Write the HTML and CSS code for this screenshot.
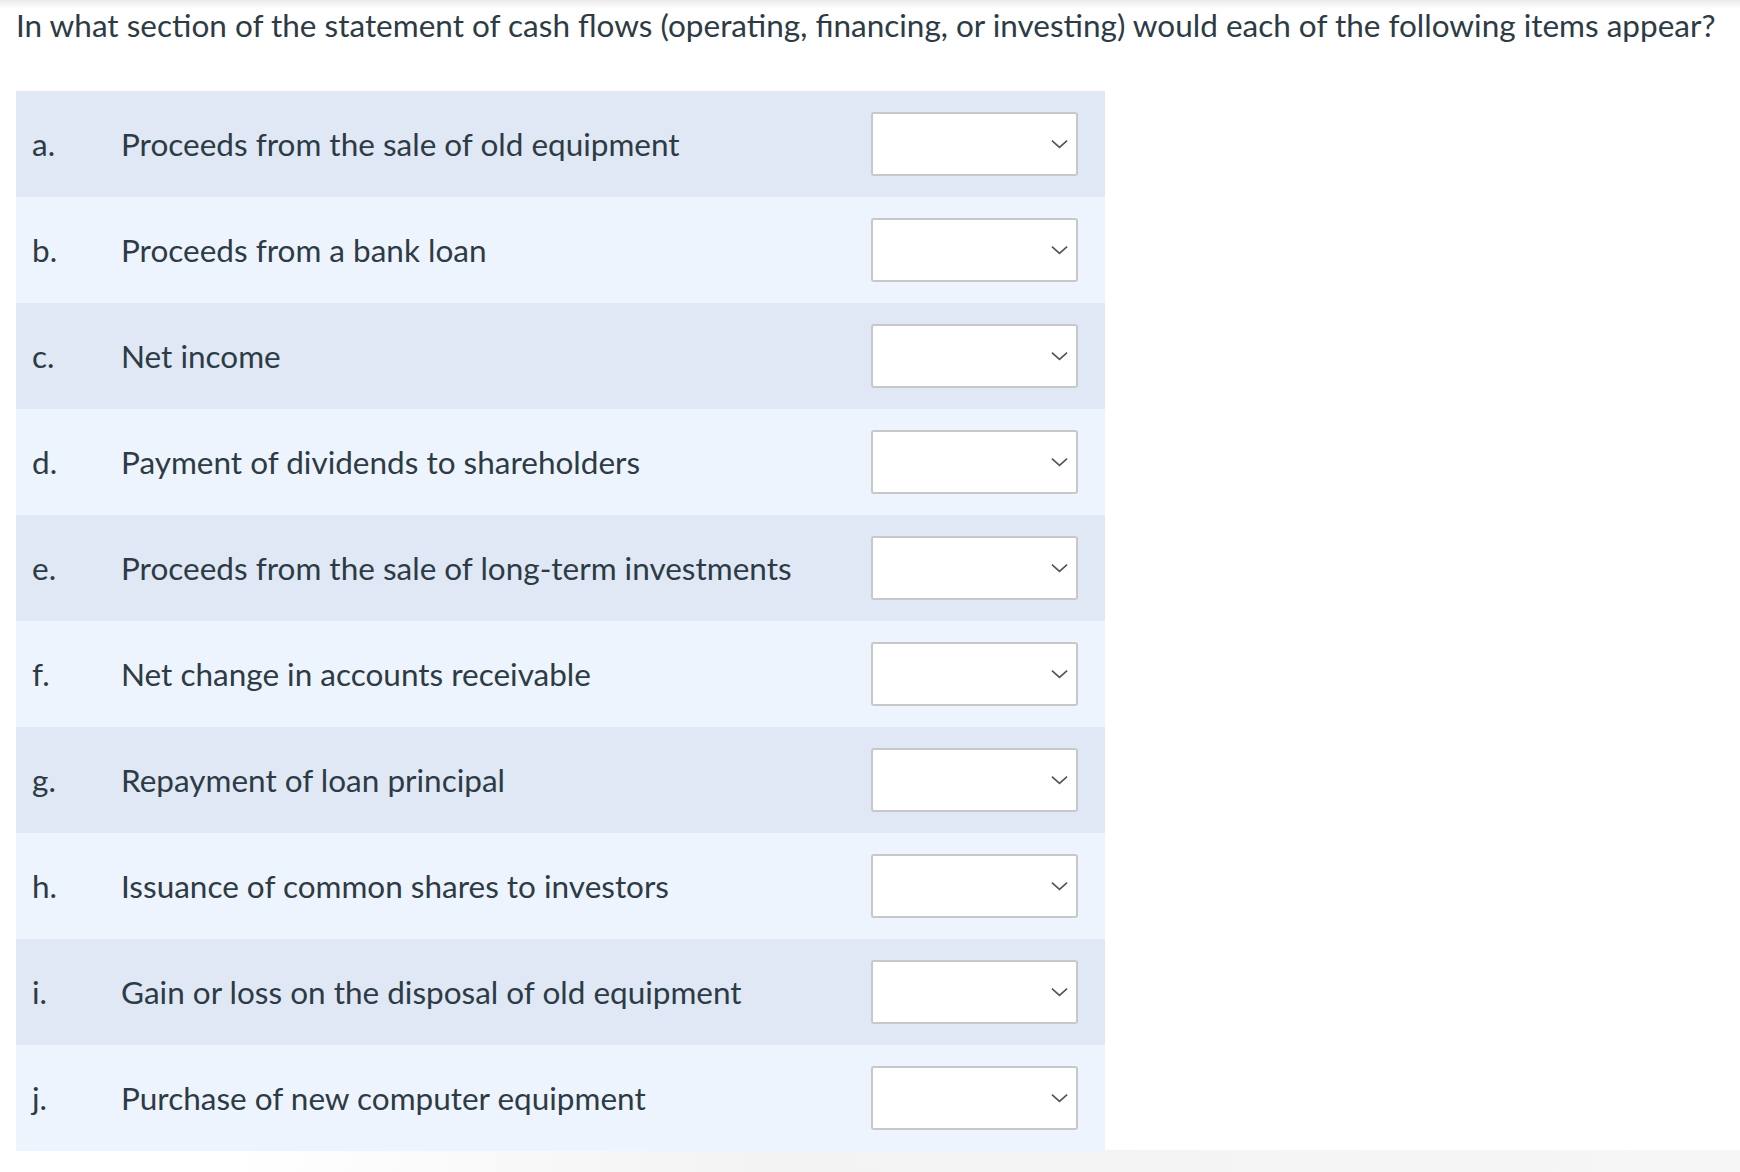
FILE: index.html
```html
<!DOCTYPE html>
<html lang="en">
<head>
<meta charset="utf-8">
<link rel="stylesheet" href="styles.css">
</head>
<body>
<div class="page">
  <p class="question">In what section of the statement of cash flows (operating, financing, or investing) would each of the following items appear?</p>
  <div class="table">
    <div class="row odd"><span class="label">a.</span><span class="item">Proceeds from the sale of old equipment</span><div class="select"><svg class="chev" viewBox="0 0 18 10"><path d="M1 1.5 L9 8.5 L17 1.5" /></svg></div></div>
    <div class="row even"><span class="label">b.</span><span class="item">Proceeds from a bank loan</span><div class="select"><svg class="chev" viewBox="0 0 18 10"><path d="M1 1.5 L9 8.5 L17 1.5" /></svg></div></div>
    <div class="row odd"><span class="label">c.</span><span class="item">Net income</span><div class="select"><svg class="chev" viewBox="0 0 18 10"><path d="M1 1.5 L9 8.5 L17 1.5" /></svg></div></div>
    <div class="row even"><span class="label">d.</span><span class="item">Payment of dividends to shareholders</span><div class="select"><svg class="chev" viewBox="0 0 18 10"><path d="M1 1.5 L9 8.5 L17 1.5" /></svg></div></div>
    <div class="row odd"><span class="label">e.</span><span class="item">Proceeds from the sale of long-term investments</span><div class="select"><svg class="chev" viewBox="0 0 18 10"><path d="M1 1.5 L9 8.5 L17 1.5" /></svg></div></div>
    <div class="row even"><span class="label">f.</span><span class="item">Net change in accounts receivable</span><div class="select"><svg class="chev" viewBox="0 0 18 10"><path d="M1 1.5 L9 8.5 L17 1.5" /></svg></div></div>
    <div class="row odd"><span class="label">g.</span><span class="item">Repayment of loan principal</span><div class="select"><svg class="chev" viewBox="0 0 18 10"><path d="M1 1.5 L9 8.5 L17 1.5" /></svg></div></div>
    <div class="row even"><span class="label">h.</span><span class="item">Issuance of common shares to investors</span><div class="select"><svg class="chev" viewBox="0 0 18 10"><path d="M1 1.5 L9 8.5 L17 1.5" /></svg></div></div>
    <div class="row odd"><span class="label">i.</span><span class="item">Gain or loss on the disposal of old equipment</span><div class="select"><svg class="chev" viewBox="0 0 18 10"><path d="M1 1.5 L9 8.5 L17 1.5" /></svg></div></div>
    <div class="row even"><span class="label">j.</span><span class="item">Purchase of new computer equipment</span><div class="select"><svg class="chev" viewBox="0 0 18 10"><path d="M1 1.5 L9 8.5 L17 1.5" /></svg></div></div>
  </div>
</div>
</body>
</html>
```
FILE: styles.css
```css
html, body {
  margin: 0;
  padding: 0;
  background: #ffffff;
}
body {
  font-family: Lato, "Open Sans", sans-serif;
  color: #2d3b45;
  height: 1172px;
  overflow: hidden;
  background:
    linear-gradient(to bottom, rgba(0,0,0,0.08), rgba(0,0,0,0) 9px) top / 100% 12px no-repeat,
    linear-gradient(to right, #ffffff 230px, #f3f3f3 760px, #f6f6f6 1740px) bottom / 100% 22px no-repeat,
    #ffffff;
}
.page {
  padding: 7px 0 0 16px;
}
.question {
  margin: 0;
  font-size: 31.5px;
  line-height: 36px;
}
.table {
  margin-top: 48px;
  width: 1089px;
  display: flex;
  flex-direction: column;
}
.row {
  height: 106px;
  display: flex;
  align-items: center;
  font-size: 31.5px;
}
.odd { background: #dfe8f4; }
.even { background: #eef4fd; }
.label {
  width: 105px;
  padding-left: 16px;
  box-sizing: border-box;
}
.item {
  flex: 1;
}
.select {
  width: 207px;
  height: 64px;
  box-sizing: border-box;
  margin-right: 27px;
  background: #ffffff;
  border: 2px solid #c8c8c8;
  border-radius: 3px;
  display: flex;
  align-items: center;
  justify-content: flex-end;
  padding-right: 8px;
}
.chev {
  width: 17px;
  height: 10px;
}
.chev path {
  fill: none;
  stroke: #555555;
  stroke-width: 1.8;
}
```
